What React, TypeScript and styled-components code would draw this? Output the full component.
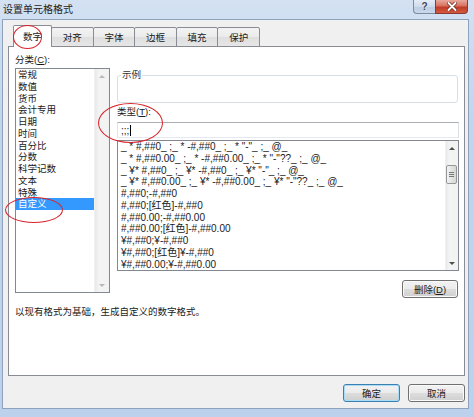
import React from 'react';
import styled, { createGlobalStyle } from 'styled-components';

const GlobalStyle = createGlobalStyle`
  html, body {
    margin: 0;
    padding: 0;
  }
  body {
    width: 474px;
    height: 417px;
    overflow: hidden;
    background: #c5d8ee;
  }
`;

const cjk = `"Liberation Sans", "Noto Sans CJK SC", sans-serif`;

const Window = styled.div`
  position: relative;
  width: 474px;
  height: 417px;
  box-sizing: border-box;
  display: flex;
  flex-direction: column;
  padding: 0 5px 8px 2px;
  background: linear-gradient(#d3e1f2, #c0d5ee 30%, #bcd2ec);
  font-family: ${cjk};
  font-size: 9.5px;
  color: #1a1a1a;
`;

const TitleBar = styled.div`
  height: 19px;
  display: flex;
  justify-content: space-between;
  align-items: flex-start;
  flex: 0 0 auto;
`;

const Title = styled.div`
  line-height: 19px;
  padding-left: 1px;
  font-size: 10px;
  color: #1e1e1e;
`;

const CaptionButtons = styled.div`
  display: flex;
  margin-right: 1px;
`;

const HelpButton = styled.div`
  width: 22px;
  height: 14px;
  box-sizing: border-box;
  border: 1px solid #7d8ba0;
  border-top: none;
  border-right: none;
  border-radius: 0 0 0 4px;
  background: linear-gradient(#e4ecf6, #cfdcec 50%, #bccde3 51%, #c9d8ea);
  display: flex;
  align-items: center;
  justify-content: center;
  font-family: "Liberation Sans", sans-serif;
  font-weight: bold;
  font-size: 10px;
  color: #3b4656;
  text-shadow: 0 0 2px #fff;
`;

const CloseButton = styled.div`
  width: 33px;
  height: 14px;
  box-sizing: border-box;
  border: 1px solid #8a3a32;
  border-top: none;
  border-radius: 0 0 4px 0;
  background: linear-gradient(#e8a89c, #d7735f 45%, #c13c26 55%, #d2593f);
  display: flex;
  align-items: center;
  justify-content: center;
`;

const Body = styled.div`
  flex: 1;
  display: flex;
  flex-direction: column;
  background: #f0f0f0;
  border: 1px solid #8ea2bb;
  padding: 6px 3px 6px 5px;
`;

const TabRow = styled.div`
  display: flex;
  align-items: flex-end;
  height: 21px;
  padding-left: 5px;
  margin-bottom: -1px;
  position: relative;
  z-index: 1;
`;

const Tab = styled.div<{ $active?: boolean }>`
  box-sizing: border-box;
  width: ${(p) => (p.$active ? '39px' : '42.6px')};
  height: ${(p) => (p.$active ? '22px' : '20px')};
  margin-left: ${(p) => (p.$active ? '0' : '-1px')};
  border: 1px solid #898c95;
  border-bottom: ${(p) => (p.$active ? 'none' : '1px solid #898c95')};
  border-radius: 2px 2px 0 0;
  background: ${(p) =>
    p.$active ? '#ffffff' : 'linear-gradient(#f3f3f3, #ebebeb 50%, #dfdfdf 51%, #e6e6e6)'};
  display: flex;
  align-items: center;
  justify-content: center;
  padding-bottom: ${(p) => (p.$active ? '1px' : '0')};
  position: relative;
  z-index: ${(p) => (p.$active ? 2 : 1)};
`;

const Panel = styled.div`
  box-sizing: border-box;
  height: 330px;
  background: #ffffff;
  border: 1px solid #898c95;
  padding: 7px 5px 0 6px;
  display: grid;
  grid-template-columns: 95px 1fr;
  column-gap: 7px;
  align-content: start;
`;

const Column = styled.div`
  display: flex;
  flex-direction: column;
  min-width: 0;
`;

const Label = styled.div`
  line-height: 12px;
  height: 12px;
`;

const Key = styled.span`
  text-decoration: underline;
`;

const ListBox = styled.div<{ $height: number }>`
  box-sizing: border-box;
  height: ${(p) => p.$height}px;
  border: 1px solid #828790;
  background: #fff;
  display: flex;
  overflow: hidden;
`;

const Items = styled.div`
  flex: 1;
  min-width: 0;
  padding-top: 0;
`;

const Item = styled.div<{ $selected?: boolean; $mono?: boolean }>`
  height: 11.75px;
  line-height: 11.75px;
  padding-left: ${(p) => (p.$mono ? '3px' : '2px')};
  white-space: nowrap;
  font-size: ${(p) => (p.$mono ? '10px' : '9.5px')};
  background: ${(p) => (p.$selected ? '#3399ff' : 'transparent')};
  color: ${(p) => (p.$selected ? '#ffffff' : '#1a1a1a')};
`;

const ScrollBar = styled.div<{ $width: number }>`
  width: ${(p) => p.$width}px;
  flex: 0 0 auto;
  display: flex;
  flex-direction: column;
  justify-content: space-between;
  background: linear-gradient(90deg, #e9e9e9, #f4f4f4 30%, #f2f2f2);
  border-left: 1px solid #f0f0f0;
`;

const Track = styled.div`
  flex: 1;
  position: relative;
`;

const Arrow = styled.div<{ $down?: boolean; $disabled?: boolean }>`
  height: 14px;
  display: flex;
  align-items: center;
  justify-content: center;
  &::before {
    content: '';
    border-left: 3px solid transparent;
    border-right: 3px solid transparent;
    ${(p) =>
      p.$down
        ? `border-top: 3px solid ${p.$disabled ? '#b8b8b8' : '#4d4d4d'};`
        : `border-bottom: 3px solid ${p.$disabled ? '#b8b8b8' : '#4d4d4d'};`}
  }
`;

const Thumb = styled.div`
  position: absolute;
  left: 0;
  right: 1px;
  top: 10px;
  height: 19px;
  box-sizing: border-box;
  border: 1px solid #979797;
  border-radius: 2px;
  background: linear-gradient(90deg, #f2f2f2, #e4e4e4 50%, #d6d6d6);
  display: flex;
  flex-direction: column;
  align-items: center;
  justify-content: center;
  gap: 1px;
`;

const Grip = styled.div`
  width: 5px;
  height: 1px;
  background: #777;
`;

const Group = styled.fieldset`
  box-sizing: border-box;
  margin: 15px 1px 0 0;
  padding: 0;
  height: 34px;
  min-width: 0;
  border: 1px solid #d5dfe5;
  border-radius: 3px;
`;

const Legend = styled.legend`
  margin-left: 3px;
  padding: 0 1px;
  line-height: 12px;
  font-size: 9.5px;
  color: #333;
`;

const TypeLabel = styled(Label)`
  margin-top: 3px;
`;

const TextInput = styled.div`
  box-sizing: border-box;
  height: 16px;
  margin-top: 4px;
  border: 1px solid #abadb3;
  border-left-color: #e2e3ea;
  border-right-color: #dbdfe6;
  border-bottom-color: #e3e9ef;
  background: #fff;
  display: flex;
  align-items: center;
  padding-left: 3px;
  font-family: "Liberation Sans", sans-serif;
  font-size: 10px;
`;

const Caret = styled.span`
  display: inline-block;
  width: 1px;
  height: 11px;
  background: #000;
  margin-left: 1px;
`;

const FormatList = styled(ListBox)`
  margin-top: 2px;
`;

const Button = styled.div<{ $default?: boolean; $width: number }>`
  box-sizing: border-box;
  width: ${(p) => p.$width}px;
  height: 18px;
  border: 1px solid ${(p) => (p.$default ? '#3c7fb1' : '#707070')};
  border-radius: 3px;
  background: linear-gradient(#f2f2f2, #ebebeb 50%, #dddddd 51%, #cfcfcf);
  box-shadow: inset 0 0 0 1px ${(p) => (p.$default ? '#a9dcf6' : '#fafafa')};
  display: flex;
  align-items: center;
  justify-content: center;
  font-size: 9.5px;
  color: #1a1a1a;
`;

const DeleteButton = styled(Button)`
  align-self: flex-end;
  margin-top: 9px;
  margin-right: 1px;
`;

const Description = styled.div`
  grid-column: 1 / -1;
  margin-top: 8px;
  line-height: 12px;
`;

const Footer = styled.div`
  display: flex;
  justify-content: flex-end;
  gap: 8px;
  padding-top: 8px;
`;

const Ring = styled.div<{ $x: number; $y: number; $w: number; $h: number }>`
  position: absolute;
  left: ${(p) => p.$x}px;
  top: ${(p) => p.$y}px;
  width: ${(p) => p.$w}px;
  height: ${(p) => p.$h}px;
  box-sizing: border-box;
  border: 1.5px solid #d8232a;
  border-radius: 50%;
  pointer-events: none;
  z-index: 5;
`;

const tabs = ['数字', '对齐', '字体', '边框', '填充', '保护'];

const categories = [
  '常规',
  '数值',
  '货币',
  '会计专用',
  '日期',
  '时间',
  '百分比',
  '分数',
  '科学记数',
  '文本',
  '特殊',
  '自定义',
];

const formats = [
  '_ * #,##0_ ;_ * -#,##0_ ;_ * "-"_ ;_ @_',
  '_ * #,##0.00_ ;_ * -#,##0.00_ ;_ * "-"??_ ;_ @_',
  '_ ¥* #,##0_ ;_ ¥* -#,##0_ ;_ ¥* "-"_ ;_ @_',
  '_ ¥* #,##0.00_ ;_ ¥* -#,##0.00_ ;_ ¥* "-"??_ ;_ @_',
  '#,##0;-#,##0',
  '#,##0;[红色]-#,##0',
  '#,##0.00;-#,##0.00',
  '#,##0.00;[红色]-#,##0.00',
  '¥#,##0;¥-#,##0',
  '¥#,##0;[红色]¥-#,##0',
  '¥#,##0.00;¥-#,##0.00',
];

export default function App() {
  return (
    <Window>
      <GlobalStyle />
      <TitleBar>
        <Title>设置单元格格式</Title>
        <CaptionButtons>
          <HelpButton>?</HelpButton>
          <CloseButton>
            <svg width="10" height="9" viewBox="0 0 10 9">
              <path d="M1.5 1 L8.5 8 M8.5 1 L1.5 8" stroke="#6b1a10" strokeWidth="3.4" strokeLinecap="round" />
              <path d="M1.5 1 L8.5 8 M8.5 1 L1.5 8" stroke="#ffffff" strokeWidth="2" strokeLinecap="round" />
            </svg>
          </CloseButton>
        </CaptionButtons>
      </TitleBar>
      <Body>
        <TabRow>
          {tabs.map((t, i) => (
            <Tab key={t} $active={i === 0}>
              {t}
            </Tab>
          ))}
        </TabRow>
        <Panel>
          <Column>
            <Label>
              分类(<Key>C</Key>):
            </Label>
            <ListBox $height={225} style={{ marginTop: 2 }}>
              <Items>
                {categories.map((c) => (
                  <Item key={c} $selected={c === '自定义'}>
                    {c}
                  </Item>
                ))}
              </Items>
              <ScrollBar $width={14}>
                <Arrow $disabled />
                <Arrow $down $disabled />
              </ScrollBar>
            </ListBox>
          </Column>
          <Column>
            <Group>
              <Legend>示例</Legend>
            </Group>
            <TypeLabel>
              类型(<Key>T</Key>):
            </TypeLabel>
            <TextInput>
              ;;;
              <Caret />
            </TextInput>
            <FormatList $height={131}>
              <Items>
                {formats.map((f) => (
                  <Item key={f} $mono>
                    {f}
                  </Item>
                ))}
              </Items>
              <ScrollBar $width={12}>
                <Arrow />
                <Track>
                  <Thumb>
                    <Grip />
                    <Grip />
                    <Grip />
                  </Thumb>
                </Track>
                <Arrow $down />
              </ScrollBar>
            </FormatList>
            <DeleteButton $width={56}>
              删除(<Key>D</Key>)
            </DeleteButton>
          </Column>
          <Description>以现有格式为基础，生成自定义的数字格式。</Description>
        </Panel>
        <Footer>
          <Button $default $width={57}>
            确定
          </Button>
          <Button $width={57}>取消</Button>
        </Footer>
      </Body>
      <Ring $x={13} $y={25} $w={29} $h={24} />
      <Ring $x={5} $y={197} $w={58} $h={26} />
      <Ring $x={98} $y={103} $w={65} $h={40} />
    </Window>
  );
}
